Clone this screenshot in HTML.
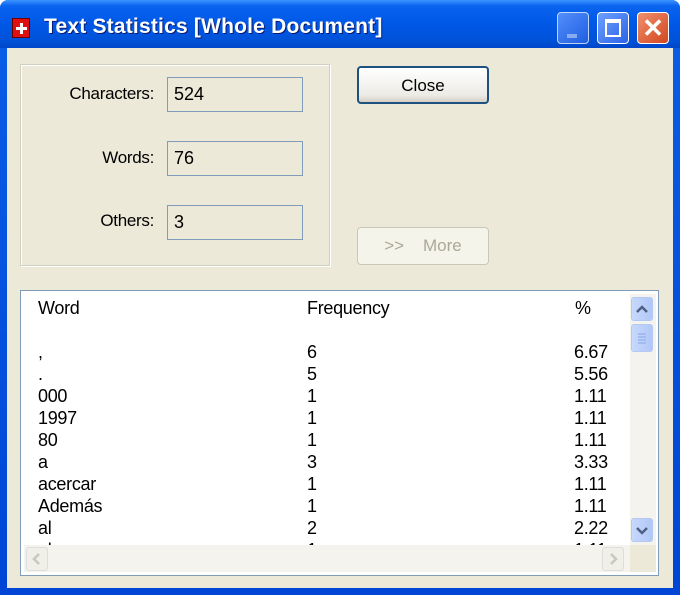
<!DOCTYPE html>
<html><head><style>
*{margin:0;padding:0;box-sizing:border-box}
body{width:680px;height:595px;overflow:hidden;background:#fff;font-family:"Liberation Sans",Tahoma,sans-serif}
.win{position:absolute;left:0;top:0;width:680px;height:595px;background:linear-gradient(#0a5ee8,#0046d6);border-radius:8px 8px 0 0}
.tb{position:absolute;left:0;top:0;width:680px;height:48px;background:linear-gradient(#3d95ff 0,#0a64f0 12%,#0058e6 50%,#0052d8 85%,#0046c8 100%);border-radius:8px 8px 0 0}
.title{position:absolute;left:44px;top:15px;color:#fff;font-weight:bold;font-size:21px;text-shadow:1px 1px #0a1870;letter-spacing:0.2px}
.ico{position:absolute;left:12px;top:18px;width:18px;height:20px;background:#e01010;border:1px solid #600}
.ico:before{content:"";position:absolute;left:7px;top:4px;width:3px;height:11px;background:#fff}
.ico:after{content:"";position:absolute;left:3px;top:8px;width:11px;height:3px;background:#fff}
.btn{position:absolute;top:12px;width:32px;height:32px;border:1px solid #fff;border-radius:4px;background:linear-gradient(135deg,#6fa0ff,#2a63e6)}
.cbtn{background:linear-gradient(135deg,#f09070,#d2461e)}
.client{position:absolute;left:7px;top:48px;width:666px;height:540px;background:#ece9d8}
.grp{position:absolute;left:20px;top:64px;width:310px;height:202px;border:1px solid #d0d0bf;box-shadow:inset 1px 1px #fff,1px 1px #fff}
.lbl{position:absolute;font-size:17px;color:#000;text-align:right;width:150px;left:4px;letter-spacing:-0.3px}
.tf{position:absolute;left:167px;width:136px;height:35px;border:1px solid #7f9db9;font-size:18px;padding:6px 0 0 6px;background:#ece9d8}
.pb{position:absolute;left:357px;width:132px;height:38px;border-radius:4px;font-size:17px;text-align:center;line-height:36px}
.list{position:absolute;left:20px;top:290px;width:639px;height:286px;border:1px solid #7f9db9;background:#fff;overflow:hidden}
.row{position:absolute;font-size:18px;line-height:22px;color:#000;letter-spacing:-0.3px}
.vs{position:absolute;left:609px;top:3px;width:26px;height:252px;background:#f4f3ee}
.hs{position:absolute;left:3px;top:254px;width:606px;height:27px;background:#f4f3ee}
.sb{position:absolute;width:22px;height:24px;border:1px solid #b4c8f4;border-radius:3px;background:linear-gradient(90deg,#c8d8fc,#b0c8f8);text-align:center}
</style></head><body>
<div class="win">
<div class="tb"><div class="ico"></div><div class="title">Text Statistics [Whole Document]</div>
<div class="btn" style="left:557px;opacity:.75"><div style="position:absolute;left:9px;top:21px;width:10px;height:4px;background:#fff;opacity:.6"></div></div>
<div class="btn" style="left:597px"><div style="position:absolute;left:7px;top:6px;width:16px;height:18px;border:2px solid #fff;border-top-width:4px"></div></div>
<div class="btn cbtn" style="left:637px;color:#fff;font-size:26px;text-align:center;line-height:30px;font-weight:bold">✕</div>
</div>
<div class="client"></div>
<div class="grp"></div>
<div class="lbl" style="top:84px">Characters:</div>
<div class="tf" style="top:77px">524</div>
<div class="lbl" style="top:148px">Words:</div>
<div class="tf" style="top:141px">76</div>
<div class="lbl" style="top:211px">Others:</div>
<div class="tf" style="top:205px">3</div>
<div class="pb" style="top:66px;border:2px solid #1c5180;background:linear-gradient(#fff,#ecebe6 80%,#d6d0c5)">Close</div>
<div class="pb" style="top:227px;border:1px solid #c9c7ba;background:#f5f4ea;color:#aca899">&gt;&gt;&nbsp;&nbsp;&nbsp;&nbsp;More</div>
<div class="list">
<div class="row" style="left:17px;top:6px">Word</div>
<div class="row" style="left:286px;top:6px">Frequency</div>
<div class="row" style="left:554px;top:6px">%</div>
<div class="row" style="left:17px;top:50px">,<br>.<br>000<br>1997<br>80<br>a<br>acercar<br>Además<br>al<br>al</div>
<div class="row" style="left:286px;top:50px">6<br>5<br>1<br>1<br>1<br>3<br>1<br>1<br>2<br>1</div>
<div class="row" style="left:553px;top:50px">6.67<br>5.56<br>1.11<br>1.11<br>1.11<br>3.33<br>1.11<br>1.11<br>2.22<br>1.11</div>
<div class="vs">
<div class="sb" style="left:1px;top:3px"><svg width="20" height="22"><path d="M5 14l5-5 5 5" fill="none" stroke="#4d6185" stroke-width="2.5"/></svg></div>
<div class="sb" style="left:1px;top:30px;height:28px"><svg width="20" height="26"><path d="M6 9h8M6 12h8M6 15h8M6 18h8" stroke="#8aa6e6" stroke-width="1"/></svg></div>
<div class="sb" style="left:1px;top:224px"><svg width="20" height="22"><path d="M5 9l5 5 5-5" fill="none" stroke="#4d6185" stroke-width="2.5"/></svg></div>
</div>
<div class="hs">
<div class="sb" style="left:2px;top:2px;background:#f0efe8;border-color:#ddd"><svg width="20" height="22"><path d="M12 6l-5 5 5 5" fill="none" stroke="#c8c8c0" stroke-width="2.5"/></svg></div>
<div class="sb" style="left:578px;top:2px;background:#f0efe8;border-color:#ddd"><svg width="20" height="22"><path d="M8 6l5 5-5 5" fill="none" stroke="#c8c8c0" stroke-width="2.5"/></svg></div>
</div>
<div style="position:absolute;left:609px;top:254px;width:26px;height:27px;background:#ece9d8"></div>
</div>
</div>
</body></html>
